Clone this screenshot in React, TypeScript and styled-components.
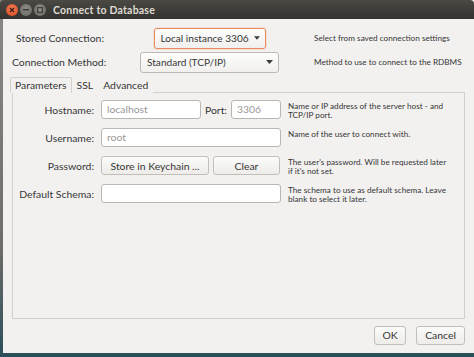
import { createGlobalStyle } from "styled-components";
import styled from "styled-components";

const GlobalStyle = createGlobalStyle`
  html, body {
    margin: 0;
    padding: 0;
    background: #1f3a44;
  }
  * {
    box-sizing: border-box;
  }
`;

const Desktop = styled.div`
  width: 474px;
  height: 357px;
  background: linear-gradient(180deg, #8a8986 0%, #6d6c69 70%, #2a4e5a 100%);
  padding: 0 0 4px 3px;
  font-family: Lato, "Open Sans", sans-serif;
  color: #363636;
  overflow: hidden;
`;

const Window = styled.div`
  width: 471px;
  height: 353px;
  background: #f2f1f0;
  display: flex;
  flex-direction: column;
`;

const TitleBar = styled.div`
  height: 19px;
  margin-left: -3px;
  width: 474px;
  background: linear-gradient(180deg, #4a4944 0%, #3c3b37 60%, #33322e 100%);
  display: flex;
  align-items: center;
  padding-left: 6px;
  gap: 2px;
  border-radius: 4px 4px 0 0;
`;

const WinButton = styled.span<{ $close?: boolean }>`
  width: 12px;
  height: 12px;
  border-radius: 50%;
  display: flex;
  align-items: center;
  justify-content: center;
  background: ${(p) =>
    p.$close
      ? "radial-gradient(circle at 50% 40%, #f4845a 0%, #e0552c 70%, #b9421f 100%)"
      : "radial-gradient(circle at 50% 40%, #8f8d88 0%, #6f6d68 80%, #5c5a56 100%)"};
`;

const Title = styled.span`
  margin-left: 5px;
  font-size: 10.5px;
  font-weight: 700;
  color: #dfdbd2;
  letter-spacing: 0.2px;
`;

const Body = styled.div`
  flex: 1;
  display: flex;
  flex-direction: column;
  padding: 9px 9px 6px 9px;
`;

const TopGrid = styled.div`
  display: grid;
  grid-template-columns: 128px 139px 1fr;
  grid-auto-rows: 20px;
  row-gap: 4px;
  align-items: center;
`;

const TopLabel = styled.span<{ $indent?: number }>`
  font-size: 10.4px;
  padding-left: ${(p) => p.$indent ?? 0}px;
  white-space: nowrap;
`;

const Combo = styled.div<{ $width: number; $focused?: boolean }>`
  width: ${(p) => p.$width}px;
  height: 21px;
  justify-self: center;
  display: flex;
  align-items: center;
  justify-content: space-between;
  gap: 5px;
  padding: 0 5px 0 6px;
  border: 1px solid ${(p) => (p.$focused ? "#ea8a63" : "#bdbab5")};
  border-radius: 3px;
  background: linear-gradient(180deg, #fdfdfc 0%, #f1f0ee 100%);
  font-size: 10.1px;
  color: #363636;
  white-space: nowrap;
  box-shadow: ${(p) => (p.$focused ? "0 0 0 1px rgba(240,119,70,0.15)" : "none")};
`;

const Help = styled.span<{ $offset?: number }>`
  font-size: 8.2px;
  line-height: 8.6px;
  color: #363636;
  white-space: nowrap;
  margin-left: ${(p) => p.$offset ?? 0}px;
`;

const Tabs = styled.div`
  display: flex;
  align-items: flex-end;
  margin-top: 4px;
  height: 16px;
  margin-left: -2px;
`;

const Tab = styled.div<{ $active?: boolean }>`
  height: 16px;
  padding: 0 4px;
  font-size: 10.4px;
  line-height: 15px;
  border: 1px solid ${(p) => (p.$active ? "#d3d0cc" : "transparent")};
  border-bottom: none;
  border-radius: 2px 2px 0 0;
  background: #f2f1f0;
  position: relative;
  z-index: 1;
  margin-bottom: -1px;
`;

const Panel = styled.div`
  height: 227px;
  border: 1px solid #d3d0cc;
  padding: 7px 6px 0 0;
  display: grid;
  grid-template-columns: 81px 180px 1fr;
  column-gap: 7px;
  row-gap: 9px;
  grid-auto-rows: 19px;
  align-content: start;
`;

const FieldLabel = styled.span`
  font-size: 10.4px;
  text-align: right;
  align-self: center;
  white-space: nowrap;
`;

const ControlRow = styled.div`
  display: flex;
  align-items: center;
  gap: 4px;
`;

const Input = styled.div<{ $width?: number }>`
  height: 19px;
  width: ${(p) => (p.$width ? `${p.$width}px` : "100%")};
  border: 1px solid #bab7b2;
  border-radius: 3px;
  background: #ffffff;
  font-size: 10.4px;
  color: #9a9896;
  padding-left: 5px;
  line-height: 17px;
  flex-shrink: 0;
`;

const InlineLabel = styled.span`
  font-size: 10.4px;
`;

const Button = styled.div<{ $width: number }>`
  width: ${(p) => p.$width}px;
  height: 19px;
  border: 1px solid #c2bfba;
  border-radius: 3px;
  background: linear-gradient(180deg, #fbfbfa 0%, #edece9 100%);
  font-size: 10.4px;
  display: flex;
  align-items: center;
  justify-content: center;
  color: #363636;
  flex-shrink: 0;
  white-space: nowrap;
`;

const RowHelp = styled(Help)`
  align-self: start;
  padding-top: 2px;
`;

const Footer = styled.div`
  flex: 1;
  display: flex;
  justify-content: flex-end;
  align-items: center;
  gap: 10px;
  padding-top: 4px;
`;

const Arrow = () => (
  <svg width="7" height="4" viewBox="0 0 7 4">
    <path d="M0 0 L7 0 L3.5 4 Z" fill="#3c3c3c" />
  </svg>
);

const App = () => {
  return (
    <>
      <GlobalStyle />
      <Desktop>
        <Window>
          <TitleBar>
            <WinButton $close>
              <svg width="6" height="6" viewBox="0 0 6 6">
                <path d="M1 1 L5 5 M5 1 L1 5" stroke="#3a1a10" strokeWidth="1.3" />
              </svg>
            </WinButton>
            <WinButton>
              <svg width="6" height="2" viewBox="0 0 6 2">
                <rect width="6" height="1.5" fill="#3c3b37" />
              </svg>
            </WinButton>
            <WinButton>
              <svg width="6" height="6" viewBox="0 0 6 6">
                <rect x="0.6" y="0.6" width="4.8" height="4.8" fill="none" stroke="#3c3b37" strokeWidth="1.1" />
              </svg>
            </WinButton>
            <Title>Connect to Database</Title>
          </TitleBar>
          <Body>
            <TopGrid>
              <TopLabel $indent={4}>Stored Connection:</TopLabel>
              <Combo $width={112} $focused>
                <span>Local instance 3306</span>
                <Arrow />
              </Combo>
              <Help $offset={35}>Select from saved connection settings</Help>
              <TopLabel>Connection Method:</TopLabel>
              <Combo $width={139}>
                <span>Standard (TCP/IP)</span>
                <Arrow />
              </Combo>
              <Help $offset={35}>Method to use to connect to the RDBMS</Help>
            </TopGrid>
            <Tabs>
              <Tab $active>Parameters</Tab>
              <Tab>SSL</Tab>
              <Tab>Advanced</Tab>
            </Tabs>
            <Panel>
              <FieldLabel>Hostname:</FieldLabel>
              <ControlRow>
                <Input $width={100}>localhost</Input>
                <InlineLabel>Port:</InlineLabel>
                <Input $width={50}>3306</Input>
              </ControlRow>
              <RowHelp>
                Name or IP address of the server host - and
                <br />
                TCP/IP port.
              </RowHelp>

              <FieldLabel>Username:</FieldLabel>
              <Input>root</Input>
              <RowHelp>Name of the user to connect with.</RowHelp>

              <FieldLabel>Password:</FieldLabel>
              <ControlRow>
                <Button $width={108}>Store in Keychain ...</Button>
                <Button $width={67}>Clear</Button>
              </ControlRow>
              <RowHelp>
                The user's password. Will be requested later
                <br />
                if it's not set.
              </RowHelp>

              <FieldLabel>Default Schema:</FieldLabel>
              <Input />
              <RowHelp>
                The schema to use as default schema. Leave
                <br />
                blank to select it later.
              </RowHelp>
            </Panel>
            <Footer>
              <Button $width={32}>OK</Button>
              <Button $width={49}>Cancel</Button>
            </Footer>
          </Body>
        </Window>
      </Desktop>
    </>
  );
};

export default App;
